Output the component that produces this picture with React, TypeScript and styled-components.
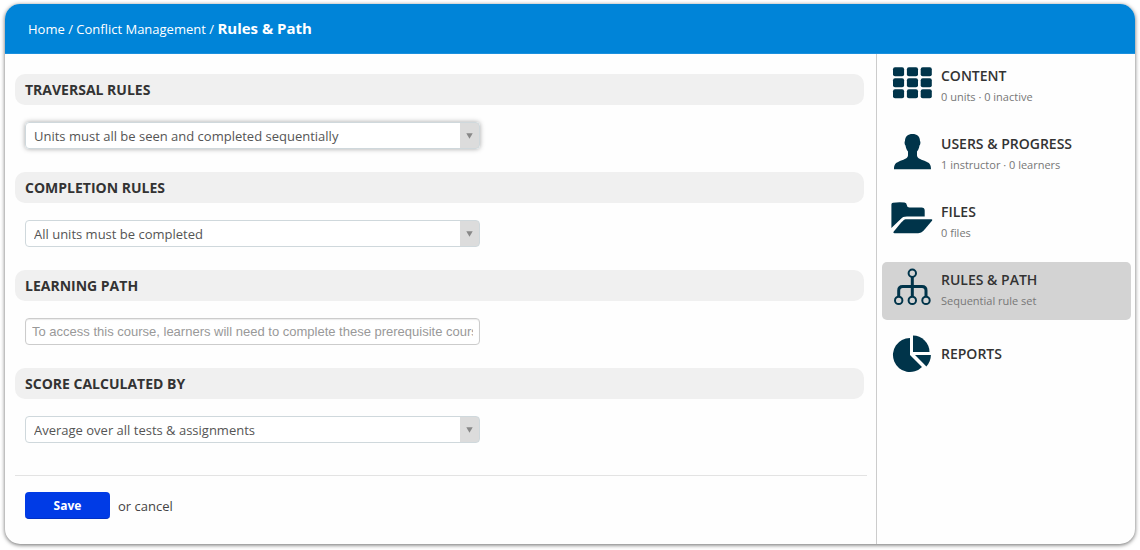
import React from "react";
import styled, { createGlobalStyle } from "styled-components";

const GlobalStyle = createGlobalStyle`
  *, *::before, *::after { box-sizing: border-box; }
  body {
    margin: 0;
    background: #fff;
    color: #333;
    font-family: "Open Sans", "Noto Sans", sans-serif;
    font-size: 13px;
    line-height: 20px;
  }
`;

const Card = styled.div`
  margin: 4px 5px 6px;
  min-height: calc(100vh - 10px);
  display: flex;
  flex-direction: column;
  background: #fefefe;
  border-radius: 15px;
  box-shadow: 0 1px 4px rgba(0, 0, 0, 0.6);
  overflow: hidden;
`;

const Header = styled.header`
  height: 50px;
  flex: none;
  display: flex;
  align-items: center;
  padding: 0 23px;
  background: #0084d8;
  border-bottom: 1px solid #1a90de;
  color: #fff;
`;

const Breadcrumb = styled.nav`
  white-space: pre;
`;

const Crumb = styled.a`
  color: inherit;
  text-decoration: none;
`;

const Current = styled.strong`
  font-size: 15px;
  font-weight: 700;
`;

const Body = styled.div`
  flex: 1;
  display: flex;
`;

const Form = styled.form`
  flex: 1;
  min-width: 0;
  padding: 20px 9px 24px 10px;
`;

const Section = styled.section`
  margin-right: 3px;
`;

const SectionTitle = styled.label`
  display: flex;
  align-items: center;
  height: 31px;
  padding: 0 10px;
  border-radius: 10px;
  background: #f0f0f0;
  font-size: 14px;
  font-weight: 700;
`;

const Field = styled.div`
  padding: 17px 10px 23px;
`;

const SelectBox = styled.div<{ $raised?: boolean }>`
  display: flex;
  position: relative;
  width: 100%;
  max-width: 455px;
  height: 27px;
  border: 1px solid #cfd8dc;
  border-radius: 4px;
  background: linear-gradient(to left, #dcdcdc 19px, #fff 19px);
  box-shadow: ${(p) => (p.$raised ? "0 0 5px rgba(0, 0, 0, 0.35)" : "none")};
`;

const Select = styled.select`
  appearance: none;
  flex: 1;
  min-width: 0;
  padding: 0 28px 0 8px;
  border: 0;
  background: transparent;
  color: #555;
  font: inherit;
  outline-offset: 2px;
`;

const Arrow = styled.svg`
  position: absolute;
  right: 6px;
  top: 10px;
  pointer-events: none;
`;

const TextInput = styled.input`
  display: block;
  width: 100%;
  max-width: 455px;
  height: 27px;
  padding: 0 6px;
  border: 1px solid #ccc;
  border-radius: 4px;
  background: #fff;
  box-shadow: inset 0 1px 1px rgba(0, 0, 0, 0.08);
  font: 13px "Liberation Sans", Arial, sans-serif;
  &::placeholder { color: #999; opacity: 1; }
`;

const Actions = styled.div`
  display: flex;
  align-items: center;
  gap: 8px;
  margin-top: 9px;
  padding: 16px 10px 0;
  border-top: 1px solid #e3e3e3;
  color: #444;
`;

const SaveButton = styled.button`
  width: 85px;
  height: 27px;
  padding: 0;
  border: 0;
  border-bottom: 1px solid #0030c4;
  border-radius: 4px;
  background: #003be6;
  color: #fff;
  font: 700 12px "Open Sans", sans-serif;
`;

const Sidebar = styled.nav`
  flex: 0 0 259px;
  display: flex;
  flex-direction: column;
  gap: 10px;
  padding: 4px 4px 4px 5px;
  border-left: 1px solid #ccc;
`;

const Item = styled.a<{ $active?: boolean }>`
  display: flex;
  align-items: center;
  gap: 8px;
  height: 58px;
  padding-left: 9px;
  border-radius: 5px;
  background: ${(p) => (p.$active ? "#d3d3d3" : "transparent")};
  color: #333;
  text-decoration: none;
`;

const ShortItem = styled(Item)`
  height: 48px;
`;

const ItemText = styled.span`
  display: flex;
  flex-direction: column;
  gap: 1px;
  padding-bottom: 1px;
`;

const ItemTitle = styled.span`
  font-size: 14px;
  font-weight: 600;
`;

const ItemNote = styled.span`
  color: #777;
  font-size: 11px;
`;

const Icon = styled.svg`
  flex: none;
  width: 42px;
  height: 58px;
  fill: #00344a;
`;

const ShortIcon = styled(Icon)`
  height: 48px;
`;

const GridIcon = () => (
  <Icon viewBox="0 0 42 58" aria-hidden="true">
    {[9.3, 20.3, 31.3].map((y) =>
      [2, 15.9, 29.7].map((x) => (
        <rect key={`${x}-${y}`} x={x} y={y} width="11.1" height="8.9" rx="2" />
      ))
    )}
  </Icon>
);

const UserIcon = () => (
  <Icon viewBox="0 0 42 58" aria-hidden="true">
    <path d="M21.5 8C26 8 29 10.5 29 15C29.7 15.5 29.6 18.5 28.5 19.5C28 22.5 27 24.5 26 25.5V29.5C26.5 33 31 33.5 35 35.5C39 37.3 40 39 40 43.3H3C3 39 4 37.3 8 35.5C12 33.5 16.5 33 17 29.5V25.5C16 24.5 15 22.5 14.5 19.5C13.4 18.5 13.3 15.5 14 15C14 10.5 17 8 21.5 8Z" />
  </Icon>
);

const FolderIcon = () => (
  <Icon viewBox="0 0 42 58" aria-hidden="true">
    <path d="M.4 34V10.5Q.4 9 2 8.8Q8 8 13.5 8.6Q15.6 8.9 15.8 11Q16 13.6 18.5 13.6H30.5Q33.7 13.6 33.7 16.5V22.600H16C12.5 22.600 11.5 23.200 9.500 25.300Z" />
    <path d="M16 25.2H40.5Q41.9 25.2 41 26.7L34 35C31 38.5 29.5 39.2 26 39.2H3.5Q1.5 39.2 3 37.3L10 28.8C13 25.5 13.5 25.2 16 25.2Z" />
  </Icon>
);

const PathIcon = () => (
  <Icon viewBox="0 0 42 58" aria-hidden="true">
    <g fill="none" stroke="#00344a">
      <g strokeWidth="2">
        <circle cx="21.3" cy="11.2" r="3.7" />
        <circle cx="7.7" cy="38.4" r="3.7" />
        <circle cx="21.3" cy="38.4" r="3.7" />
        <circle cx="35" cy="38.4" r="3.7" />
      </g>
      <path
        strokeWidth="3"
        d="M21.3 15V34.5M7.7 34.5V28.5Q7.7 24.5 11.7 24.5H31Q35 24.5 35 28.5V34.5"
      />
    </g>
  </Icon>
);

const PieIcon = () => (
  <ShortIcon viewBox="0 0 42 48" aria-hidden="true">
    <path d="M19 8V25L31 37A17 17 0 1 1 19 8Z" />
    <path d="M22 5.6A16.5 16.5 0 0 1 38.5 22H22Z" />
    <path d="M24 25H39.9A17 17 0 0 1 35.4 36.4Z" />
  </ShortIcon>
);

type DropDownProps = { id: string; options: string[]; raised?: boolean };

const DropDown = ({ id, options, raised }: DropDownProps) => (
  <SelectBox $raised={raised}>
    <Select id={id} defaultValue={options[0]}>
      {options.map((o) => (
        <option key={o}>{o}</option>
      ))}
    </Select>
    <Arrow width="7" height="6" viewBox="0 0 7 6" aria-hidden="true">
      <path d="M.3 .3H6.7L3.5 5.7Z" fill="#888" />
    </Arrow>
  </SelectBox>
);

const NAV = [
  { title: "CONTENT", note: "0 units · 0 inactive", icon: <GridIcon /> },
  { title: "USERS & PROGRESS", note: "1 instructor · 0 learners", icon: <UserIcon /> },
  { title: "FILES", note: "0 files", icon: <FolderIcon /> },
  { title: "RULES & PATH", note: "Sequential rule set", icon: <PathIcon />, active: true },
];

export default function App() {
  return (
    <>
      <GlobalStyle />
      <Card>
        <Header>
          <Breadcrumb>
            <Crumb href="#">Home</Crumb> / <Crumb href="#">Conflict Management</Crumb> /{" "}
            <Current>Rules &amp; Path</Current>
          </Breadcrumb>
        </Header>
        <Body>
          <Form onSubmit={(e) => e.preventDefault()}>
            <Section>
              <SectionTitle htmlFor="traversal">TRAVERSAL RULES</SectionTitle>
              <Field>
                <DropDown id="traversal" raised options={["Units must all be seen and completed sequentially"]} />
              </Field>
            </Section>
            <Section>
              <SectionTitle htmlFor="completion">COMPLETION RULES</SectionTitle>
              <Field>
                <DropDown id="completion" options={["All units must be completed"]} />
              </Field>
            </Section>
            <Section>
              <SectionTitle htmlFor="path">LEARNING PATH</SectionTitle>
              <Field>
                <TextInput
                  id="path"
                  placeholder="To access this course, learners will need to complete these prerequisite courses"
                />
              </Field>
            </Section>
            <Section>
              <SectionTitle htmlFor="score">SCORE CALCULATED BY</SectionTitle>
              <Field>
                <DropDown id="score" options={["Average over all tests & assignments"]} />
              </Field>
            </Section>
            <Actions>
              <SaveButton type="submit">Save</SaveButton>
              <span>
                or <Crumb href="#">cancel</Crumb>
              </span>
            </Actions>
          </Form>
          <Sidebar>
            {NAV.map((n) => (
              <Item key={n.title} href="#" $active={n.active}>
                {n.icon}
                <ItemText>
                  <ItemTitle>{n.title}</ItemTitle>
                  <ItemNote>{n.note}</ItemNote>
                </ItemText>
              </Item>
            ))}
            <ShortItem href="#">
              <PieIcon />
              <ItemTitle>REPORTS</ItemTitle>
            </ShortItem>
          </Sidebar>
        </Body>
      </Card>
    </>
  );
}
